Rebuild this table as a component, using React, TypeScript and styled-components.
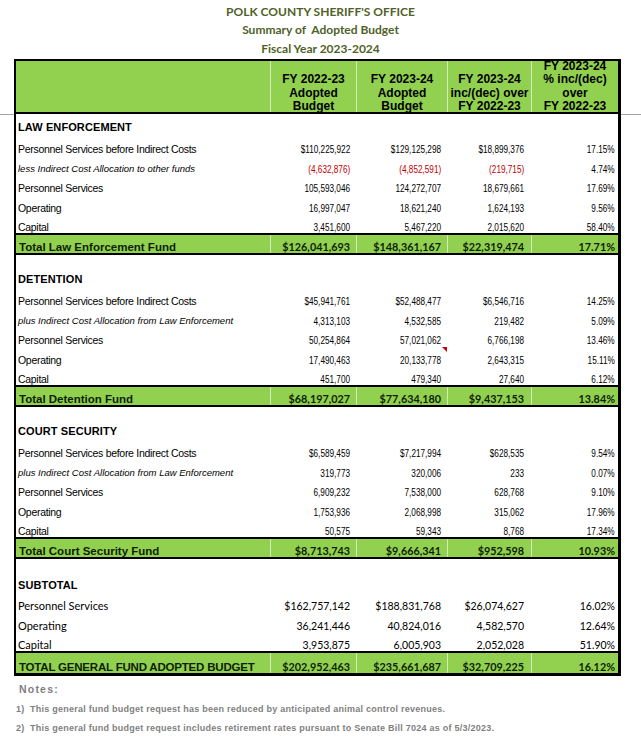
import React from 'react';
import styled, { createGlobalStyle } from 'styled-components';

const GREEN = '#92d050';
const SEP = 'rgba(255,255,255,0.6)';
const COLS = '254px 86px 91px 84px 87px';
const PAD = [6, 6, 7, 3];

const Global = createGlobalStyle`
  *, *::before, *::after { box-sizing: border-box; }
  html, body { margin: 0; padding: 0; background: #fff; }
  body { width: 641px; height: 744px; overflow: hidden; }
`;

const Page = styled.div`
  font-family: "Liberation Sans", Arial, sans-serif;
  color: #000;
`;

const Titles = styled.header`
  height: 59px;
  padding-top: 2.5px;
  display: flex;
  flex-direction: column;
  align-items: center;
`;

const TitleLine = styled.div`
  font-family: Lato, "Liberation Sans", sans-serif;
  font-weight: 700;
  font-size: 12px;
  line-height: 18.6px;
  color: #4f6228;
  white-space: pre;
`;

const Table = styled.div`
  margin-left: 14px;
  width: 607px;
  border-left: 2px solid #000;
  border-right: 3px solid #000;
  border-bottom: 3px solid #000;
  display: flex;
  flex-direction: column;
`;

const HeadRow = styled.div`
  position: relative;
  display: grid;
  grid-template-columns: ${COLS};
  grid-template-rows: 51px;
  height: 55px;
  background: ${GREEN};
  border-top: 2px solid #000;
  border-bottom: 2px solid #000;
  &::before,
  &::after {
    content: '';
    position: absolute;
    bottom: -3px;
    height: 1px;
    background: #a6a6a6;
  }
  &::before { left: -16px; width: 14px; }
  &::after { right: -23px; width: 20px; }
`;

const HeadCell = styled.div<{ $first?: boolean }>`
  display: flex;
  flex-direction: column;
  justify-content: flex-end;
  align-items: center;
  min-height: 0;
  border-left: ${p => (p.$first ? 'none' : `1px solid ${SEP}`)};
  font-weight: 700;
  font-size: 12px;
  line-height: 13.5px;
  text-align: center;
  white-space: nowrap;
`;

const HeadText = styled.div`
  flex-shrink: 0;
  margin-bottom: -1.5px;
`;

const Spacer = styled.div<{ $h: number }>`
  height: ${p => p.$h}px;
`;

const Row = styled.div<{ $h: number; $pb?: number }>`
  display: grid;
  grid-template-columns: ${COLS};
  height: ${p => p.$h}px;
  padding-bottom: ${p => p.$pb ?? 0}px;
  align-items: end;
  line-height: 12px;
`;

const SectionTitle = styled.div`
  padding-left: 2px;
  font-weight: 700;
  font-size: 11px;
  letter-spacing: 0.1px;
  white-space: nowrap;
`;

type LabelKind = 'plain' | 'italic' | 'calibri';

const Label = styled.div<{ $kind: LabelKind }>`
  padding-left: 2px;
  white-space: nowrap;
  font-family: ${p => (p.$kind === 'calibri' ? 'Lato, "Liberation Sans", sans-serif' : '"Liberation Sans", Arial, sans-serif')};
  font-size: ${p => (p.$kind === 'italic' ? '9.5px' : p.$kind === 'calibri' ? '11px' : '10.5px')};
  font-style: ${p => (p.$kind === 'italic' ? 'italic' : 'normal')};
  letter-spacing: ${p => (p.$kind === 'plain' ? '-0.3px' : '0')};
`;

const Num = styled.div<{ $col: number; $neg?: boolean; $calibri?: boolean }>`
  position: relative;
  align-self: stretch;
  display: flex;
  align-items: flex-end;
  justify-content: flex-end;
  padding-right: ${p => PAD[p.$col]}px;
  white-space: nowrap;
  color: ${p => (p.$neg ? '#c00000' : '#000')};
  font-family: ${p => (p.$calibri ? 'Lato, "Liberation Sans", sans-serif' : '"Liberation Sans", Arial, sans-serif')};
  font-size: ${p => (p.$calibri ? '10.5px' : '10.8px')};
`;

const NumText = styled.span<{ $squeeze?: boolean }>`
  display: inline-block;
  transform: ${p => (p.$squeeze ? 'scaleX(0.76)' : 'none')};
  transform-origin: 100% 50%;
`;

const CommentMark = styled.span`
  position: absolute;
  top: 1px;
  right: 0;
  width: 0;
  height: 0;
  border-top: 5px solid #cc0000;
  border-left: 5px solid transparent;
`;

const TotalRow = styled.div<{ $grand?: boolean }>`
  display: grid;
  grid-template-columns: ${COLS};
  height: 22px;
  background: ${GREEN};
  border-top: 2px solid #000;
  border-bottom: ${p => (p.$grand ? 'none' : '2px solid #000')};
  line-height: 12px;
  color: #0d1f05;
`;

const TotalLabel = styled.div<{ $grand?: boolean }>`
  display: flex;
  align-items: flex-end;
  padding-left: 3px;
  font-weight: 700;
  font-size: 11.5px;
  letter-spacing: ${p => (p.$grand ? '-0.2px' : '0')};
  white-space: nowrap;
`;

const TotalNum = styled.div<{ $col: number }>`
  display: flex;
  align-items: flex-end;
  justify-content: flex-end;
  padding-right: ${p => PAD[p.$col]}px;
  border-left: 1px solid ${SEP};
  font-family: Lato, "Liberation Sans", sans-serif;
  font-weight: 700;
  font-size: 10.8px;
  white-space: nowrap;
`;

const Notes = styled.div`
  padding-top: 4px;
  padding-left: 16px;
  color: #7f7f7f;
  font-weight: 700;
  font-size: 9px;
  letter-spacing: 0.25px;
  line-height: 19.6px;
  white-space: pre;
`;

const NotesHead = styled.div`
  padding-left: 3px;
  font-size: 10.5px;
  letter-spacing: 1.2px;
`;

type Line = {
  label: string;
  kind: LabelKind;
  vals: string[];
  neg?: boolean;
  mark?: number;
};

type Section = {
  title: string;
  lines: Line[];
  total: { label: string; vals: string[] };
};

const sections: Section[] = [
  {
    title: 'LAW ENFORCEMENT',
    lines: [
      { label: 'Personnel Services before Indirect Costs', kind: 'plain', vals: ['$110,225,922', '$129,125,298', '$18,899,376', '17.15%'] },
      { label: 'less Indirect Cost Allocation to other funds', kind: 'italic', vals: ['(4,632,876)', '(4,852,591)', '(219,715)', '4.74%'], neg: true },
      { label: 'Personnel Services', kind: 'plain', vals: ['105,593,046', '124,272,707', '18,679,661', '17.69%'] },
      { label: 'Operating', kind: 'plain', vals: ['16,997,047', '18,621,240', '1,624,193', '9.56%'] },
      { label: 'Capital', kind: 'plain', vals: ['3,451,600', '5,467,220', '2,015,620', '58.40%'] },
    ],
    total: { label: 'Total Law Enforcement Fund', vals: ['$126,041,693', '$148,361,167', '$22,319,474', '17.71%'] },
  },
  {
    title: 'DETENTION',
    lines: [
      { label: 'Personnel Services before Indirect Costs', kind: 'plain', vals: ['$45,941,761', '$52,488,477', '$6,546,716', '14.25%'] },
      { label: 'plus Indirect Cost Allocation from Law Enforcement', kind: 'italic', vals: ['4,313,103', '4,532,585', '219,482', '5.09%'] },
      { label: 'Personnel Services', kind: 'plain', vals: ['50,254,864', '57,021,062', '6,766,198', '13.46%'] },
      { label: 'Operating', kind: 'plain', vals: ['17,490,463', '20,133,778', '2,643,315', '15.11%'], mark: 1 },
      { label: 'Capital', kind: 'plain', vals: ['451,700', '479,340', '27,640', '6.12%'] },
    ],
    total: { label: 'Total Detention Fund', vals: ['$68,197,027', '$77,634,180', '$9,437,153', '13.84%'] },
  },
  {
    title: 'COURT SECURITY',
    lines: [
      { label: 'Personnel Services before Indirect Costs', kind: 'plain', vals: ['$6,589,459', '$7,217,994', '$628,535', '9.54%'] },
      { label: 'plus Indirect Cost Allocation from Law Enforcement', kind: 'italic', vals: ['319,773', '320,006', '233', '0.07%'] },
      { label: 'Personnel Services', kind: 'plain', vals: ['6,909,232', '7,538,000', '628,768', '9.10%'] },
      { label: 'Operating', kind: 'plain', vals: ['1,753,936', '2,068,998', '315,062', '17.96%'] },
      { label: 'Capital', kind: 'plain', vals: ['50,575', '59,343', '8,768', '17.34%'] },
    ],
    total: { label: 'Total Court Security Fund', vals: ['$8,713,743', '$9,666,341', '$952,598', '10.93%'] },
  },
];

const subtotal: Line[] = [
  { label: 'Personnel Services', kind: 'calibri', vals: ['$162,757,142', '$188,831,768', '$26,074,627', '16.02%'] },
  { label: 'Operating', kind: 'calibri', vals: ['36,241,446', '40,824,016', '4,582,570', '12.64%'] },
  { label: 'Capital', kind: 'calibri', vals: ['3,953,875', '6,005,903', '2,052,028', '51.90%'] },
];

const headers: string[][] = [
  [],
  ['FY 2022-23', 'Adopted', 'Budget'],
  ['FY 2023-24', 'Adopted', 'Budget'],
  ['FY 2023-24', 'inc/(dec) over', 'FY 2022-23'],
  ['FY 2023-24', '% inc/(dec)', 'over', 'FY 2022-23'],
];

function DataRow({ line }: { line: Line }) {
  const calibri = line.kind === 'calibri';
  return (
    <Row $h={19.5}>
      <Label $kind={line.kind}>{line.label}</Label>
      {line.vals.map((v, i) => (
        <Num key={i} $col={i} $neg={line.neg && i < 3} $calibri={calibri}>
          <NumText $squeeze={!calibri}>{v}</NumText>
          {line.mark === i && <CommentMark />}
        </Num>
      ))}
    </Row>
  );
}

function Total({ label, vals, grand }: { label: string; vals: string[]; grand?: boolean }) {
  return (
    <TotalRow $grand={grand}>
      <TotalLabel $grand={grand}>{label}</TotalLabel>
      {vals.map((v, i) => (
        <TotalNum key={i} $col={i}>
          {v}
        </TotalNum>
      ))}
    </TotalRow>
  );
}

export default function App() {
  return (
    <Page>
      <Global />
      <Titles>
        <TitleLine>POLK COUNTY SHERIFF'S OFFICE</TitleLine>
        <TitleLine>{'Summary of  Adopted Budget'}</TitleLine>
        <TitleLine>Fiscal Year 2023-2024</TitleLine>
      </Titles>
      <Table>
        <HeadRow>
          {headers.map((lines, i) => (
            <HeadCell key={i} $first={i === 0}>
              <HeadText>
                {lines.map((l, j) => (
                  <div key={j}>{l}</div>
                ))}
              </HeadText>
            </HeadCell>
          ))}
        </HeadRow>
        {sections.map((s, si) => (
          <React.Fragment key={s.title}>
            {si > 0 && <Spacer $h={11} />}
            <Row $h={21.5} $pb={3}>
              <SectionTitle>{s.title}</SectionTitle>
            </Row>
            {s.lines.map((l, li) => (
              <DataRow key={li} line={l} />
            ))}
            <Total label={s.total.label} vals={s.total.vals} />
          </React.Fragment>
        ))}
        <Spacer $h={11} />
        <Row $h={22.5} $pb={2}>
          <SectionTitle>SUBTOTAL</SectionTitle>
        </Row>
        {subtotal.map((l, li) => (
          <DataRow key={li} line={l} />
        ))}
        <Total
          grand
          label="TOTAL GENERAL FUND ADOPTED BUDGET"
          vals={['$202,952,463', '$235,661,687', '$32,709,225', '16.12%']}
        />
      </Table>
      <Notes>
        <NotesHead>Notes:</NotesHead>
        <div>{'1)  This general fund budget request has been reduced by anticipated animal control revenues.'}</div>
        <div>{'2)  This general fund budget request includes retirement rates pursuant to Senate Bill 7024 as of 5/3/2023.'}</div>
      </Notes>
    </Page>
  );
}
